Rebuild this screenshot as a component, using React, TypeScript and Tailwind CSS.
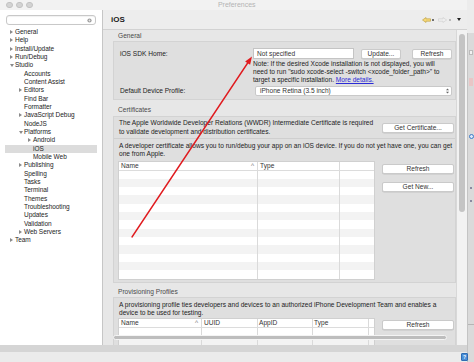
import React from 'react'

type TreeNode = { label: string; depth: 0 | 1 | 2; arrow?: 'right' | 'down'; selected?: boolean }

const tree: TreeNode[] = [
  { label: 'General', depth: 0, arrow: 'right' },
  { label: 'Help', depth: 0, arrow: 'right' },
  { label: 'Install/Update', depth: 0, arrow: 'right' },
  { label: 'Run/Debug', depth: 0, arrow: 'right' },
  { label: 'Studio', depth: 0, arrow: 'down' },
  { label: 'Accounts', depth: 1 },
  { label: 'Content Assist', depth: 1 },
  { label: 'Editors', depth: 1, arrow: 'right' },
  { label: 'Find Bar', depth: 1 },
  { label: 'Formatter', depth: 1 },
  { label: 'JavaScript Debug', depth: 1, arrow: 'right' },
  { label: 'NodeJS', depth: 1 },
  { label: 'Platforms', depth: 1, arrow: 'down' },
  { label: 'Android', depth: 2, arrow: 'right' },
  { label: 'iOS', depth: 2, selected: true },
  { label: 'Mobile Web', depth: 2 },
  { label: 'Publishing', depth: 1, arrow: 'right' },
  { label: 'Spelling', depth: 1 },
  { label: 'Tasks', depth: 1 },
  { label: 'Terminal', depth: 1 },
  { label: 'Themes', depth: 1 },
  { label: 'Troubleshooting', depth: 1 },
  { label: 'Updates', depth: 1 },
  { label: 'Validation', depth: 1 },
  { label: 'Web Servers', depth: 1, arrow: 'right' },
  { label: 'Team', depth: 0, arrow: 'right' },
]

const indent = { 0: 'pl-[5px]', 1: 'pl-[14px]', 2: 'pl-[23px]' }

function Arrow({ dir }: { dir?: 'right' | 'down' }) {
  if (!dir) return <span className="w-[5px] shrink-0" />
  return (
    <span className="w-[5px] shrink-0 flex items-center">
      {dir === 'right' ? (
        <svg width="3" height="4" viewBox="0 0 3 4"><polygon points="0,0 3,2 0,4" fill="#8a8a8a" /></svg>
      ) : (
        <svg width="4" height="3" viewBox="0 0 4 3"><polygon points="0,0 4,0 2,3" fill="#8a8a8a" /></svg>
      )}
    </span>
  )
}

function Btn({ children, className }: { children: React.ReactNode; className: string }) {
  return (
    <div
      className={`flex items-center justify-center bg-white border border-[#cacaca] rounded-[2px] shadow-[0_0.5px_0.5px_rgba(0,0,0,0.12)] text-[#333] ${className}`}
    >
      {children}
    </div>
  )
}

function Rows({ cols, count }: { cols: string[]; count: number }) {
  return (
    <>
      {Array.from({ length: count }).map((_, i) => (
        <div key={i} className={`flex h-[8.33px] ${i % 2 === 1 ? 'bg-[#f3f3f3]' : 'bg-white'}`}>
          {cols.map((w, j) => (
            <div key={j} className={`${w} h-full ${j > 0 ? 'border-l border-[#dadada]' : ''}`} />
          ))}
        </div>
      ))}
    </>
  )
}

export default function App() {
  return (
    <div className="relative w-[474px] h-[362px] overflow-hidden flex bg-[#ececec] font-['Liberation_Sans',Arial,sans-serif] text-[6.5px] leading-[8px] text-[#1c1c1c]">
      {/* window */}
      <div className="w-[467px] h-full flex flex-col">
        {/* title bar */}
        <div className="h-[10px] shrink-0 flex items-center bg-[#f2f2f2] relative">
          <div className="flex items-center gap-[3.5px] pl-[6px]">
            <span className="w-[6.5px] h-[6.5px] rounded-full bg-[#d3d3d3] border border-[#c2c2c2]" />
            <span className="w-[6.5px] h-[6.5px] rounded-full bg-[#d3d3d3] border border-[#c2c2c2]" />
            <span className="w-[6.5px] h-[6.5px] rounded-full bg-[#d3d3d3] border border-[#c2c2c2]" />
          </div>
          <div className="flex-1 flex justify-center pr-[26px] text-[7px] text-[#b4b4b4]">Preferences</div>
        </div>

        {/* body */}
        <div className="flex-1 min-h-0 flex">
          {/* left tree pane */}
          <div className="w-[103px] shrink-0 bg-white border-r border-[#c6c6c6] flex flex-col pt-[5px] px-[5px]">
            <div className="h-[10px] ml-[1px] mr-[1px] bg-white border border-[#c8c8c8] rounded-[3px] shadow-[inset_0_0.5px_1px_rgba(0,0,0,0.1)] flex items-center justify-end pr-[3px]">
              <svg width="5" height="5" viewBox="0 0 10 10">
                <circle cx="5" cy="5" r="4.2" fill="#9a9a9a" />
                <circle cx="5" cy="5" r="1.8" fill="#e8e8e8" />
              </svg>
            </div>
            <div className="mt-[3px] flex flex-col">
              {tree.map((n) => (
                <div
                  key={n.label}
                  className={`h-[8.33px] flex items-center ${indent[n.depth]} ${n.selected ? 'bg-[#dcdcdc]' : ''}`}
                >
                  <Arrow dir={n.arrow} />
                  <span className="whitespace-nowrap tracking-[-0.05px]">{n.label}</span>
                </div>
              ))}
            </div>
          </div>

          {/* right pane */}
          <div className="flex-1 min-w-0 flex flex-col text-[6.6px]">
            <div className="h-[20px] shrink-0 flex items-center pl-[8px] pr-[6px] border-b border-[#d2d2d2] bg-[#ededed]">
              <span className="font-bold text-[8px] text-[#1a1a1a]">iOS</span>
              <div className="ml-auto flex items-center">
                <svg width="9" height="6" viewBox="0 0 9 6">
                  <polygon points="0.5,3 4,0.5 4,1.8 8.5,1.8 8.5,4.2 4,4.2 4,5.5" fill="#f6d878" stroke="#b99b35" strokeWidth="0.6" />
                </svg>
                <span className="ml-[1px] w-[2px] h-[2px] bg-[#444] rounded-full" />
                <svg className="ml-[4px]" width="9" height="6" viewBox="0 0 9 6">
                  <polygon points="8.5,3 5,0.5 5,1.8 0.5,1.8 0.5,4.2 5,4.2 5,5.5" fill="#efefef" stroke="#cdcdcd" strokeWidth="0.6" />
                </svg>
                <span className="ml-[2px] w-[2px] h-[2px] bg-[#aaa] rounded-full" />
                <svg className="ml-[6px]" width="4" height="3" viewBox="0 0 4 3">
                  <polygon points="0,0 4,0 2,3" fill="#222" />
                </svg>
              </div>
            </div>

            <div className="flex-1 min-h-0 flex relative bg-[#e7e7e7]">
              <div className="flex-1 min-w-0 overflow-hidden pl-[10px] flex flex-col">
                {/* General */}
                <div className="h-[11px] shrink-0 pl-[5px] pt-[2px] text-[#4a4a4a]">General</div>
                <div className="h-[59px] shrink-0 bg-[#dfdfdf] border border-[#d3d3d3] pl-[6px] pr-[3px] pt-[6px] flex flex-col">
                  <div className="h-[11px] flex items-center">
                    <span className="w-[133px] shrink-0">iOS SDK Home:</span>
                    <div className="w-[101px] h-[11px] bg-white border border-[#c4c4c4] flex items-center pl-[3px] text-[#333]">Not specified</div>
                    <Btn className="ml-[7px] w-[40px] h-[10px]">Update...</Btn>
                    <Btn className="ml-[11px] w-[40px] h-[10px]">Refresh</Btn>
                  </div>
                  <div className="ml-[133px] mt-[1px] flex flex-col whitespace-nowrap">
                    <span>Note: If the desired Xcode installation is not displayed, you will</span>
                    <span>need to run "sudo xcode-select -switch &lt;xcode_folder_path&gt;" to</span>
                    <span>
                      target a specific installation. <span className="text-[#2b2bd6] underline">More details.</span>
                    </span>
                  </div>
                  <div className="mt-[1.5px] h-[10px] flex items-center">
                    <span className="w-[135px] shrink-0">Default Device Profile:</span>
                    <div className="w-[197px] h-[10px] bg-white border border-[#c9c9c9] rounded-[2px] flex items-center pl-[4px] pr-[2px] text-[#333]">
                      <span>iPhone Retina (3.5 inch)</span>
                      <svg className="ml-auto" width="3" height="6" viewBox="0 0 3 6">
                        <polygon points="0,2.3 1.5,0.5 3,2.3" fill="#666" />
                        <polygon points="0,3.7 1.5,5.5 3,3.7" fill="#666" />
                      </svg>
                    </div>
                  </div>
                </div>

                {/* Certificates */}
                <div className="h-[16px] shrink-0 pl-[5px] pt-[6px] text-[#4a4a4a]">Certificates</div>
                <div className="h-[167px] shrink-0 bg-[#dfdfdf] border border-[#d3d3d3] flex flex-col">
                  <div className="flex items-center pl-[5px] pr-[1px] pt-[2px]">
                    <div className="flex-1 flex flex-col leading-[8.5px] whitespace-nowrap">
                      <span>The Apple Worldwide Developer Relations (WWDR) Intermediate Certificate is required</span>
                      <span>to validate development and distribution certificates.</span>
                    </div>
                    <Btn className="w-[72px] h-[10px]">Get Certificate...</Btn>
                  </div>
                  <div className="mt-[2px] h-px bg-[#cfcfcf]" />
                  <div className="pl-[5px] pt-[3px] flex flex-col whitespace-nowrap">
                    <span>A developer certificate allows you to run/debug your app on an iOS device. If you do not yet have one, you can get</span>
                    <span>one from Apple.</span>
                  </div>
                  <div className="mt-[3px] flex pl-[4px] pr-[1px]">
                    <div className="w-[258px] bg-white border border-[#d0d0d0] flex flex-col">
                      <div className="h-[8.5px] flex border-b border-[#dcdcdc] text-[#333]">
                        <div className="w-[138px] flex items-center pl-[2px] pr-[3px]">
                          <span>Name</span>
                          <span className="ml-auto text-[#777]">^</span>
                        </div>
                        <div className="w-[82px] border-l border-[#dadada] flex items-center pl-[2px]">Type</div>
                        <div className="flex-1 border-l border-[#dadada]" />
                      </div>
                      <Rows cols={['w-[138px]', 'w-[82px]', 'flex-1']} count={13} />
                    </div>
                    <div className="ml-[7px] flex flex-col">
                      <Btn className="mt-[2.5px] w-[72px] h-[10px]">Refresh</Btn>
                      <Btn className="mt-[8px] w-[72px] h-[10px]">Get New...</Btn>
                    </div>
                  </div>
                </div>

                {/* Provisioning Profiles */}
                <div className="h-[14px] shrink-0 pl-[5px] pt-[5px] text-[#4a4a4a]">Provisioning Profiles</div>
                <div className="flex-1 bg-[#dfdfdf] border border-[#d3d3d3] flex flex-col">
                  <div className="pl-[5px] pt-[3px] flex flex-col leading-[7.5px] whitespace-nowrap">
                    <span>A provisioning profile ties developers and devices to an authorized iPhone Development Team and enables a</span>
                    <span>device to be used for testing.</span>
                  </div>
                  <div className="mt-[2px] flex pl-[4px] pr-[1px]">
                    <div className="w-[258px] bg-white border border-[#d0d0d0] flex flex-col">
                      <div className="h-[9px] flex border-b border-[#dcdcdc] text-[#333]">
                        <div className="w-[82px] flex items-center pl-[2px] pr-[3px]">
                          <span>Name</span>
                          <span className="ml-auto text-[#777]">^</span>
                        </div>
                        <div className="w-[56px] border-l border-[#dadada] flex items-center pl-[2px]">UUID</div>
                        <div className="w-[55px] border-l border-[#dadada] flex items-center pl-[1px]">AppID</div>
                        <div className="w-[56px] border-l border-[#dadada] flex items-center pl-[1px]">Type</div>
                        <div className="flex-1 border-l border-[#dadada]" />
                      </div>
                      <Rows cols={['w-[82px]', 'w-[56px]', 'w-[55px]', 'w-[56px]', 'flex-1']} count={2} />
                    </div>
                    <div className="ml-[7px] flex flex-col">
                      <Btn className="mt-[2px] w-[72px] h-[10px]">Refresh</Btn>
                    </div>
                  </div>
                </div>
              </div>

              {/* vertical scrollbar */}
              <div className="w-[11px] shrink-0 border-l border-[#d8d8d8] bg-[#f2f2f2] pt-[4px] pl-[2px]">
                <div className="w-[6px] h-[178px] rounded-full bg-[#c4c4c4]" />
              </div>

              {/* horizontal overlay scrollbar */}
              <div className="absolute left-[10px] bottom-[5px] w-[334px] h-[5px] rounded-full bg-[#bdbdbd] border border-[#f4f4f4]" />
            </div>
          </div>
        </div>

        {/* bottom bar */}
        <div className="h-[7px] shrink-0 bg-[#d5d5d5]" />
        <div className="h-[10px] shrink-0 bg-[#ebebeb]" />
      </div>

      {/* neighbouring window strip */}
      <div className="w-[7px] h-full flex flex-col">
        <div className="h-[33px] bg-[#ececec]" />
        <div className="flex-1 bg-[#dadada] border-l border-[#c4c4c4] flex flex-col items-center">
          <div className="mt-[17px] w-[4px] h-[5px] bg-[#f2f2f2] border border-[#bbb]" />
          <div className="mt-[23px] w-[4px] h-[8px] bg-[#e9c6c6]" />
          <div className="mt-[48px] w-[5px] h-[5px] rounded-full border border-[#3a78c9] bg-[#dfe9f6]" />
          <div className="mt-[48px] w-[2px] h-[2px] bg-[#8a8aa0]" />
          <div className="mt-[11px] w-[2px] h-[2px] bg-[#8a8aa0]" />
          <div className="mt-[122px] w-full h-px bg-[#b5b5b5]" />
        </div>
      </div>

      {/* help icon bottom right */}
      <div className="absolute left-[461px] top-[353px] w-[7px] h-[8px] rounded-[1px] bg-[#4a8fd8] border border-[#2f6db3] flex items-center justify-center text-[5px] leading-none text-white font-bold">?</div>

      {/* red annotation arrow */}
      <svg className="absolute left-0 top-0 pointer-events-none" width="474" height="362" viewBox="0 0 474 362">
        <line x1="132" y1="237" x2="248" y2="62.5" stroke="#e01b1f" strokeWidth="1.4" strokeLinecap="round" />
        <polygon points="252,56.5 250.1,64.8 245.1,61.5" fill="#e01b1f" />
      </svg>
    </div>
  )
}
